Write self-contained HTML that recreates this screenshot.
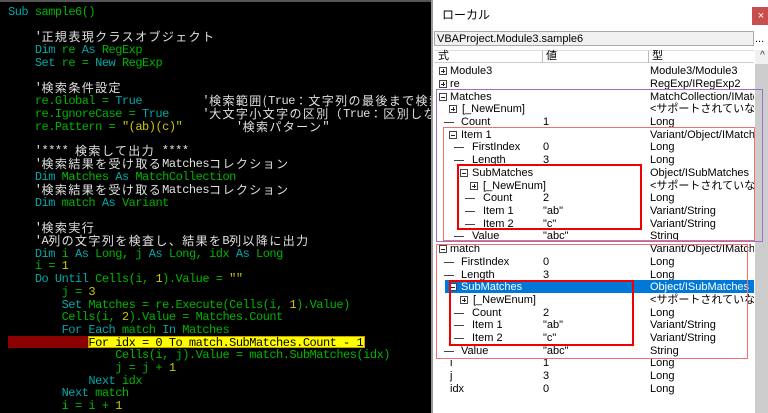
<!DOCTYPE html>
<html><head><meta charset="utf-8"><style>
body{margin:0;width:768px;height:413px;overflow:hidden;background:#000;position:relative;font-family:"Liberation Sans","Noto Sans CJK JP",sans-serif}
#code{position:absolute;left:0;top:0;width:431px;height:413px;background:#000;border-top:2px solid #555;box-sizing:border-box;overflow:hidden}
.l{position:absolute;left:8px;white-space:pre;font-family:"Liberation Mono","Noto Sans CJK JP",monospace;font-size:12px;letter-spacing:-0.5px;line-height:12px;color:#e0e0e0}
.j{font-family:"Noto Sans CJK JP",sans-serif;font-size:12px;letter-spacing:1.4px;line-height:12px;vertical-align:top}
.k{color:#00a8a8}.g{color:#00b400}.y{color:#c8c800}.w{color:#e0e0e0}
#pan{position:absolute;left:431px;top:0;width:337px;height:413px;background:#fff;border-left:2px solid #999;box-sizing:border-box}
#clip{position:absolute;left:0;top:0;width:321px;height:413px;overflow:hidden}
.t{position:absolute;white-space:pre;font-size:11px;line-height:12px;color:#000;margin-top:-5px}
.bx{position:absolute;width:8px;height:8px;border:1px solid #444;box-sizing:border-box;background:#fff;margin-top:-5px}
.bx:before{content:"";position:absolute;left:1px;top:3px;width:4px;height:1px;background:#222}
.p:after{content:"";position:absolute;left:3px;top:1px;width:1px;height:4px;background:#222}
.h{position:absolute;height:1px;background:#444;margin-top:-5px}
.v{position:absolute;width:1px;background:#444}
.r{position:absolute;box-sizing:border-box}
</style></head><body>
<div id="code">
<div class="l" style="top:4px"><span class="k">Sub</span> <span class="g">sample6()</span></div>
<div class="l" style="top:29px">    '<span class="j">正規表現クラスオブジェクト</span></div>
<div class="l" style="top:42px">    <span class="k">Dim</span> <span class="g">re</span> <span class="k">As</span> <span class="g">RegExp</span></div>
<div class="l" style="top:55px">    <span class="k">Set</span> <span class="g">re = </span><span class="k">New</span> <span class="g">RegExp</span></div>
<div class="l" style="top:80px">    '<span class="j">検索条件設定</span></div>
<div class="l" style="top:93px">    <span class="g">re.Global = </span><span class="k">True</span>         '<span class="j">検索範囲(</span>True<span class="j">：文字列の最後まで検索</span></div>
<div class="l" style="top:106px">    <span class="g">re.IgnoreCase = </span><span class="k">True</span>     '<span class="j">大文字小文字の区別（</span>True<span class="j">：区別しな</span></div>
<div class="l" style="top:119px">    <span class="g">re.Pattern = </span><span class="y">"(ab)(c)"</span>        '<span class="j">検索パターン</span>"</div>
<div class="l" style="top:143px">    '**** <span class="j">検索して出力</span> ****</div>
<div class="l" style="top:156px">    '<span class="j">検索結果を受け取る</span>Matches<span class="j">コレクション</span></div>
<div class="l" style="top:169px">    <span class="k">Dim</span> <span class="g">Matches</span> <span class="k">As</span> <span class="g">MatchCollection</span></div>
<div class="l" style="top:182px">    '<span class="j">検索結果を受け取る</span>Matches<span class="j">コレクション</span></div>
<div class="l" style="top:195px">    <span class="k">Dim</span> <span class="g">match</span> <span class="k">As</span> <span class="g">Variant</span></div>
<div class="l" style="top:220px">    '<span class="j">検索実行</span></div>
<div class="l" style="top:233px">    'A<span class="j">列の文字列を検査し、結果を</span>B<span class="j">列以降に出力</span></div>
<div class="l" style="top:246px">    <span class="k">Dim</span> <span class="g">i</span> <span class="k">As</span> <span class="g">Long, j</span> <span class="k">As</span> <span class="g">Long, idx</span> <span class="k">As</span> <span class="g">Long</span></div>
<div class="l" style="top:258px">    <span class="g">i = </span><span class="y">1</span></div>
<div class="l" style="top:271px">    <span class="k">Do Until</span> <span class="g">Cells(i, </span><span class="y">1</span><span class="g">).Value = </span><span class="y">""</span></div>
<div class="l" style="top:284px">        <span class="g">j = </span><span class="y">3</span></div>
<div class="l" style="top:297px">        <span class="k">Set</span> <span class="g">Matches = re.Execute(Cells(i, </span><span class="y">1</span><span class="g">).Value)</span></div>
<div class="l" style="top:309px">        <span class="g">Cells(i, </span><span class="y">2</span><span class="g">).Value = Matches.Count</span></div>
<div class="l" style="top:322px">        <span class="k">For Each</span> <span class="g">match</span> <span class="k">In</span> <span class="g">Matches</span></div>
<div style="position:absolute;left:8px;top:334px;width:80px;height:12px;background:#8b0000"></div>
<div style="position:absolute;left:88px;top:334px;width:277px;height:12px;background:#ffff00;border:1px solid #c8a000;box-sizing:border-box"></div>
<div class="l" style="top:335px;color:#000">            For idx = 0 To match.SubMatches.Count - 1</div>
<div class="l" style="top:347px">                <span class="g">Cells(i, j).Value = match.SubMatches(idx)</span></div>
<div class="l" style="top:360px">                <span class="g">j = j + </span><span class="y">1</span></div>
<div class="l" style="top:373px">            <span class="k">Next</span> <span class="g">idx</span></div>
<div class="l" style="top:385px">        <span class="k">Next</span> <span class="g">match</span></div>
<div class="l" style="top:398px">        <span class="g">i = i + </span><span class="y">1</span></div>
</div>
<div id="pan">
<div id="clip">
<div class="t" style="left:9px;top:14px;font-size:12px">ローカル</div>
<div style="position:absolute;left:1px;top:31px;width:320px;height:15px;background:#f0f0f0;border:1px solid #aaa;box-sizing:border-box"></div>
<div class="t" style="left:4px;top:38px">VBAProject.Module3.sample6</div>
<div style="position:absolute;left:1px;top:50px;width:320px;height:13px;background:#fff;border-bottom:1px solid #ccc;border-top:1px solid #ddd;box-sizing:border-box"></div>
<div class="v" style="left:109px;top:51px;height:12px;background:#bbb"></div>
<div class="v" style="left:215px;top:51px;height:12px;background:#bbb"></div>
<div class="t" style="left:5px;top:55px">式</div><div class="t" style="left:113px;top:55px">値</div><div class="t" style="left:219px;top:55px">型</div>

<div class="bx p" style="left:6px;top:72px"></div><div class="t" style="left:17px;top:70px">Module3</div><div class="t" style="left:217px;top:70px">Module3/Module3</div>
<div class="bx p" style="left:6px;top:85px"></div><div class="t" style="left:17px;top:83px">re</div><div class="t" style="left:217px;top:83px">RegExp/IRegExp2</div>
<div class="bx" style="left:6px;top:98px"></div><div class="t" style="left:17px;top:96px">Matches</div><div class="t" style="left:217px;top:96px">MatchCollection/IMatch</div>
<div class="bx p" style="left:16px;top:110px"></div><div class="t" style="left:29px;top:108px">[_NewEnum]</div><div class="t" style="left:217px;top:108px">&lt;サポートされていない</div>
<div class="h" style="left:11px;top:127px;width:10px"></div><div class="t" style="left:28px;top:121px">Count</div><div class="t" style="left:110px;top:121px">1</div><div class="t" style="left:217px;top:121px">Long</div>
<div class="bx" style="left:16px;top:136px"></div><div class="t" style="left:28px;top:134px">Item 1</div><div class="t" style="left:217px;top:134px">Variant/Object/IMatch</div>
<div class="h" style="left:21px;top:152px;width:10px"></div><div class="t" style="left:39px;top:146px">FirstIndex</div><div class="t" style="left:110px;top:146px">0</div><div class="t" style="left:217px;top:146px">Long</div>
<div class="h" style="left:21px;top:165px;width:10px"></div><div class="t" style="left:39px;top:159px">Length</div><div class="t" style="left:110px;top:159px">3</div><div class="t" style="left:217px;top:159px">Long</div>
<div class="bx" style="left:27px;top:174px"></div><div class="t" style="left:39px;top:172px">SubMatches</div><div class="t" style="left:217px;top:172px">Object/ISubMatches</div>
<div class="bx p" style="left:37px;top:187px"></div><div class="t" style="left:50px;top:185px">[_NewEnum]</div><div class="t" style="left:217px;top:185px">&lt;サポートされていない</div>
<div class="h" style="left:32px;top:203px;width:10px"></div><div class="t" style="left:50px;top:197px">Count</div><div class="t" style="left:110px;top:197px">2</div><div class="t" style="left:217px;top:197px">Long</div>
<div class="h" style="left:32px;top:216px;width:10px"></div><div class="t" style="left:50px;top:210px">Item 1</div><div class="t" style="left:110px;top:210px">"ab"</div><div class="t" style="left:217px;top:210px">Variant/String</div>
<div class="h" style="left:32px;top:229px;width:10px"></div><div class="t" style="left:50px;top:223px">Item 2</div><div class="t" style="left:110px;top:223px">"c"</div><div class="t" style="left:217px;top:223px">Variant/String</div>
<div class="h" style="left:21px;top:241px;width:10px"></div><div class="t" style="left:39px;top:235px">Value</div><div class="t" style="left:110px;top:235px">"abc"</div><div class="t" style="left:217px;top:235px">String</div>
<div class="bx" style="left:6px;top:250px"></div><div class="t" style="left:17px;top:248px">match</div><div class="t" style="left:217px;top:248px">Variant/Object/IMatch</div>
<div class="h" style="left:11px;top:267px;width:10px"></div><div class="t" style="left:28px;top:261px">FirstIndex</div><div class="t" style="left:110px;top:261px">0</div><div class="t" style="left:217px;top:261px">Long</div>
<div class="h" style="left:11px;top:280px;width:10px"></div><div class="t" style="left:28px;top:274px">Length</div><div class="t" style="left:110px;top:274px">3</div><div class="t" style="left:217px;top:274px">Long</div>
<div style="position:absolute;left:12px;top:280px;width:310px;height:13px;background:#0078d7"></div>
<div class="bx" style="left:16px;top:288px"></div><div class="t" style="left:28px;top:286px;color:#fff">SubMatches</div><div class="t" style="left:217px;top:286px;color:#fff">Object/ISubMatches</div>
<div class="bx p" style="left:27px;top:301px"></div><div class="t" style="left:40px;top:299px">[_NewEnum]</div><div class="t" style="left:217px;top:299px">&lt;サポートされていない</div>
<div class="h" style="left:21px;top:318px;width:10px"></div><div class="t" style="left:39px;top:312px">Count</div><div class="t" style="left:110px;top:312px">2</div><div class="t" style="left:217px;top:312px">Long</div>
<div class="h" style="left:21px;top:330px;width:10px"></div><div class="t" style="left:39px;top:324px">Item 1</div><div class="t" style="left:110px;top:324px">"ab"</div><div class="t" style="left:217px;top:324px">Variant/String</div>
<div class="h" style="left:21px;top:343px;width:10px"></div><div class="t" style="left:39px;top:337px">Item 2</div><div class="t" style="left:110px;top:337px">"c"</div><div class="t" style="left:217px;top:337px">Variant/String</div>
<div class="h" style="left:11px;top:356px;width:10px"></div><div class="t" style="left:28px;top:350px">Value</div><div class="t" style="left:110px;top:350px">"abc"</div><div class="t" style="left:217px;top:350px">String</div>
<div class="t" style="left:17px;top:362px">i</div><div class="t" style="left:110px;top:362px">1</div><div class="t" style="left:217px;top:362px">Long</div>
<div class="t" style="left:17px;top:375px">j</div><div class="t" style="left:110px;top:375px">3</div><div class="t" style="left:217px;top:375px">Long</div>
<div class="t" style="left:17px;top:388px">idx</div><div class="t" style="left:110px;top:388px">0</div><div class="t" style="left:217px;top:388px">Long</div>
</div>
<div style="position:absolute;left:319px;top:7px;width:18px;height:18px;background:#c94f4f;color:#fff;font-size:11px;text-align:center;line-height:18px">×</div>
<div style="position:absolute;left:322px;top:33px;font-size:11px;color:#000">...</div>
<div style="position:absolute;left:322px;top:50px;width:15px;height:363px;background:#cdcdcd"></div>
<div style="position:absolute;left:322px;top:50px;width:15px;height:14px;background:#f0f0f0;font-size:10px;text-align:center;color:#333">^</div>

<div class="r" style="left:3px;top:89px;width:327px;height:153px;border:1px solid #9a6fc8"></div>
<div class="r" style="left:10px;top:127px;width:312px;height:114px;border:1px solid #f07070"></div>
<div class="r" style="left:24px;top:164px;width:185px;height:66px;border:2px solid #f00000"></div>
<div class="r" style="left:3px;top:244px;width:312px;height:115px;border:1px solid #f07070"></div>
<div class="r" style="left:16px;top:280px;width:185px;height:66px;border:2px solid #f00000"></div>
</div>
</body></html>
